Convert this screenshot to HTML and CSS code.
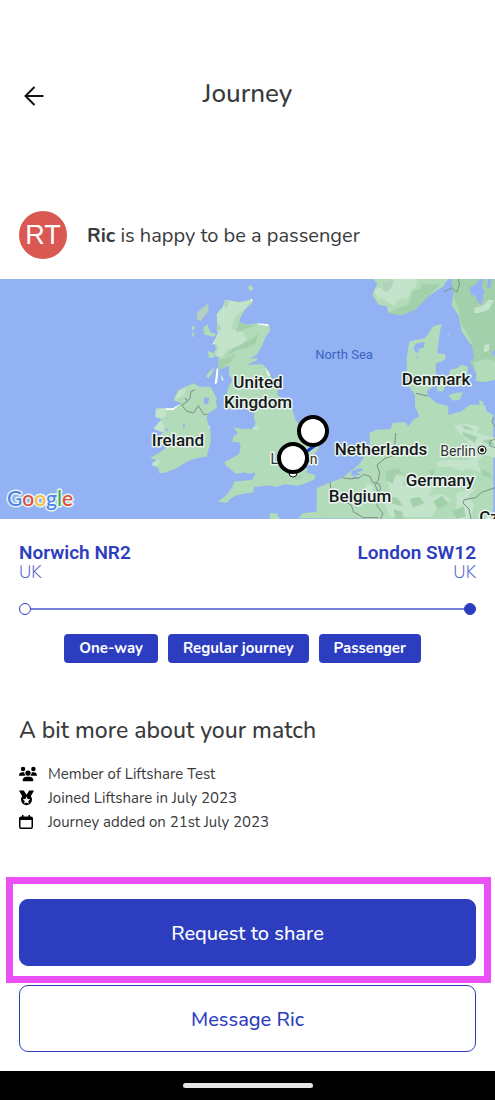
FILE: index.html
```
<!DOCTYPE html>
<html lang="en">
<head>
    <meta charset="UTF-8">
    <meta name="viewport" content="width=device-width, initial-scale=1.0">
    <title>Journey</title>
    <link rel="stylesheet" href="styles.css">
</head>
<body>
    <header class="header">
        <button class="back" type="button" aria-label="Back">
            <svg width="20" height="20" viewBox="0 0 20 20"><path d="M19.500 10H1.500M10.500 1L1.500 10l9 9"/></svg>
        </button>
        <h1>Journey</h1>
    </header>

    <main>
        <section class="person">
            <div class="avatar">RT</div>
            <p><strong>Ric</strong> is happy to be a passenger</p>
        </section>

        <svg class="map" viewBox="0 0 495 240" preserveAspectRatio="xMidYMid slice" role="img" aria-label="Map of the journey">
            <rect class="sea" width="495" height="240"/>
            <svg width="495" height="240" viewBox="0 0 1485 720">
                <!-- Great Britain -->
                <path class="land" d="M675 62l45 7 37-9v12l-22 20-15 25-2 12 22 8 32-3 36 3 2 18-12 17-13 30-15 25-20 12 22-2-2 8-30 12 48-1 20 21 8 24 15 20 3 27 17 25 25 13 10 35 15 22 60 3 2 36-10 30-25 32-22 20 19 6-7 10 28 8-1 12-27 13-25 7-40-4-25 8-20-5-45 5-3 16-34 5-19 5-16 9-10 12-28-3 24-18 20-25 5-17 55-6 10-22-20 5-15-5-25 5-15-15-15-10-3-10 43-25 5-25-5-10-20-2 2-14 14-12-13-18 27 6 35-1 5-19-5-10 2-35-17-10-25 0-20 10-8 10-10-14-9-21 12-40 10-15-10-20 0-25-25 10-8-7 3-26-17-12 8-16-6-20 14-18-5-20 2-20 3-35 13-12z"/>
                <path class="upland" d="M678 63l40 8 36-8-20 27-28 22-12 38 34 8 12 22-22 24-36 8-16 22-18-4 8-24-14-20 12-24-4-56 16-18z"/>
                <path class="hill" d="M738 190l24-14 14-16-10 34-18 10-34 8-38 22 22-26zM657 242l22-4 28-12-12 20-26 22-16 4zM718 129l26 10 24 0-30 10-30 12z"/>
                <path class="rock" d="M592 100l33-28 1 24-24 30-12-6zM650 139l10-2 3 16-13 4zM674 66l12-4-2 20-10 6z"/>
                <path class="land" d="M745 20l10 0 6 10-6 5-10-4zM576 142h10l-4 12-6-2zM577 158l6 4-2 12-5-2zM610 146l12-10 8 22 20 8-12 8-26-8zM622 215l18 6 6 14-18 2zM620 288l12-14 12-8-8 18-10 14-8-4zM662 282l10 20-8-6z"/>
                <path class="snow" d="M650 268l5 2-1 20-3 22-7 4zM664 292l6 10-4 4zM770 133l36 3-2 5-30-5zM795 267l15 22-4 3zM751 60l6 0-1 10zM640 188l6 4-6 5z"/>
                <path class="upland" d="M757 445l14-4 10 4-8 8h-12z"/>
                <!-- Ireland -->
                <path class="land" d="M520 363l15-30 45-20 20 10 32 0 23 45-5 20-25 15-5 15 12 40v30l-12 45-30 5-30 10-30 20-35 13-17 2-3-15-20-10 15-15-20-5 40-25 10-10-35-15 25-30-28-10 23-28-20-7 3-25h52l25-15z"/>
                <path class="upland" d="M468 390l27-2 4 20-14 12-18-6zM464 444l20-22 12 30-10 8-24-10zM524 358l14-24 22-8-8 22-20 12zM458 550l16-8 10 2-12 16-16-2z"/>
                <path class="sea" d="M610 362l8-8 10 4-4 16-10 2zM648 362h8l-2 18-6-4zM549 433l6 6-1 9-5-4zM496 446l8 6-2 5-8-4z"/>
                <path class="snow" d="M496 388l22 0 24-14-22 19-20 1zM627 440l4 4-2 6z"/>
                <path class="border" d="M585 332l-12 6-4 22-6 4-8-6 8 9-18 11 14 18 22 6 14-22 16 26h12"/>
                <!-- Mainland Europe -->
                <path class="land" d="M895 718l15-16 40-4 0-70 35-16 40-14 50-40 30-42 5-19-2-35 22-10 42-2 6-18 37-3 10 13 15-20 18-10-13-30v-35l-23-30-2-80 8-50 47-10 25-35 25-7-5 22-8 65 25 5-2 15-28 12 1 33-8 35-20 15 5 15 25 20 35 10v25l40-10 25-20 45 0 5 20 20 10v315z"/>
                <path class="land" d="M810 703h22v6l8 11h-32z"/>
                <path class="land" d="M1307 310l18-5 12 14-8 18-16 0zM1350 272l24-6 8-8 22 4-4 40-8 22-16-4-12-18-18 4zM1345 350l20-8 24-2-10 22-20 3zM1438 362l12 8-2 14h-10zM1344 164l5 2-4 5z"/>
                <path class="sea" d="M1240 208l8-14 26-6-2 18-10 2-8 4 4 8-10 2zM1250 228l8 8-6 2z"/>
                <path class="land" d="M1120 0h225l-15 22-45 30-40 40-40 17-40-7-5-20-25-5-18-30 14-33z"/>
                <path class="hill" d="M1240 36l20-6 6-14 54 0-35 36-40 40-40 17-40-7 30-16 30-8z"/>
                <path class="upland" d="M1122 32l38-12 22-20h70l-4 24-18 10-6 24-30 4-12 18-36-22-12 4z"/>
                <path class="rock" d="M1150 10l32-4-6 16-16 18-12-6z"/>
                <path class="hill" d="M1355 0h130v302l-30 7-28-4 3-18-20-40 13-10-8-40-30-40-8-45-22-35 5-30z"/>
                <path class="land" d="M1420 250l40-10 25 6v56l-30 7-28-4 3-18zM1355 20l8 40 12 30 12 50 30 50-6 6-26-39-8-45-22-35 5-30z"/>
                <path class="sea" d="M1409 26l20-12 8-14h14l-6 26 8 10-8 40-12-6-6-20-16-4zM1464 0h12l-6 28-8 0zM1476 220l9-6v16l-8-2z"/>
                <path class="upland" d="M1424 86l24-6 18-18 16 2-16 28-30 10-14 0zM1452 200l18-8-4 24-14 4z"/>
                <!-- Higher ground in Germany and Poland -->
                <path class="upland" d="M1360 440l40-6 40 10-12 18 57 14v60l-34-8-20 20 14 34-38-14-22 8-38-14-30 4-8-16 40-8 60 0 6-40zM1100 610l20 12-8 50-26-16zM1160 598l26-10 28 6-8 28 46-12 46 16-12 26 40-8 30 20-38 10-22 40h-126l-20-50 24-14zM1370 640l60-12-26 24 20 26-14 42h-50l10-40z"/>
                <path class="hill" d="M1386 438l20 6 18 12-30-6zM1388 458l44 16-8 18-34-22zM1156 576l38-8 16 16-22 2-10 28-18-10zM1286 576l20-6-6 16 26 4-30 10zM1104 650l20-10 10 32-20-6zM1160 648l32 10 18 24-40-10zM1230 660l28-6 16 18-36 14zM1300 668l26-18 18 24-30 16zM1180 690l26 8 6 22h-24zM1356 696l34-14 8 30-30 8zM1440 570l24 8 20 22-34-10zM880 598l20-10 10 8-20 8zM1446 486l24-6 14 20-20-4z"/>
                <path class="sea" d="M1056 575l26-8 8 6-20 8 14 6-30 2zM1060 590l18 8-20 2z"/>
                <path class="border" d="M1248 343l35 8M1187 462l-4 50-4 18-24 8-24 20 8 24-4 22-10 12 8 20-2 44 18 24-10 22M1028 596l22 4 30-4 10-10 20 6 8 18 18 4 6 14-8 18 2 22M990 610l4 30 20 16 40 22 6 20 30 18h44M1332 38l24-12 14 14 8-22-2-18M1485 626l-40 14-18 16-34 6-4 10 18 18 6 30M1480 415l-4 14 9 14M1485 480l-14 6-2 14 16 6"/>
                <path class="route" d="M946 499L900 532"/>
            </svg>
            <g class="country">
                <text x="258" y="109">United</text>
                <text x="258" y="129">Kingdom</text>
                <text x="178" y="167">Ireland</text>
                <text x="436" y="106">Denmark</text>
                <text x="381" y="176">Netherlands</text>
                <text x="440" y="207">Germany</text>
                <text x="360" y="223">Belgium</text>
                <text x="489" y="244">Cz</text>
            </g>
            <text class="water" x="344" y="80">North Sea</text>
            <g class="city">
                <text x="294" y="185">London</text>
                <text x="458" y="177">Berlin</text>
                <circle class="town" cx="482" cy="171" r="4"/>
                <circle class="town-dot" cx="482" cy="171" r="2"/>
                <circle class="town" cx="293" cy="194" r="4"/>
            </g>
            <circle class="pin" cx="313" cy="152" r="14"/>
            <circle class="pin" cx="293" cy="179" r="14"/>
            <text class="google" x="7" y="227"><tspan class="g-blue">G</tspan><tspan class="g-red">o</tspan><tspan class="g-yellow">o</tspan><tspan class="g-blue">g</tspan><tspan class="g-green">l</tspan><tspan class="g-red">e</tspan></text>
        </svg>

        <section class="route-info">
            <div class="places">
                <div class="place">
                    <h2>Norwich NR2</h2>
                    <p>UK</p>
                </div>
                <div class="place place-end">
                    <h2>London SW12</h2>
                    <p>UK</p>
                </div>
            </div>
            <div class="line">
                <span class="dot"></span>
                <span class="track"></span>
                <span class="dot dot-full"></span>
            </div>
            <div class="tags">
                <span class="tag">One-way</span>
                <span class="tag">Regular journey</span>
                <span class="tag">Passenger</span>
            </div>
        </section>

        <section class="about">
            <h2>A bit more about your match</h2>
            <ul>
                <li>
                    <svg width="18" height="16" viewBox="0 0 640 512"><path d="M144 0a80 80 0 1 1 0 160A80 80 0 1 1 144 0zM512 0a80 80 0 1 1 0 160A80 80 0 1 1 512 0zM0 298.700C0 239.800 47.800 192 106.700 192h42.700c15.900 0 31 3.500 44.600 9.700c-1.300 7.200-1.900 14.700-1.900 22.300c0 38.200 16.800 72.500 43.300 96H21.300C9.600 320 0 310.400 0 298.700zM405.300 320h-.7c26.600-23.500 43.300-57.800 43.300-96c0-7.600-.7-15-1.900-22.300c13.600-6.300 28.700-9.700 44.600-9.700h42.700C592.200 192 640 239.800 640 298.700c0 11.800-9.600 21.300-21.300 21.300H405.300zM224 224a96 96 0 1 1 192 0a96 96 0 1 1-192 0zM128 485.300C128 411.700 187.700 352 261.300 352h117.400C452.300 352 512 411.700 512 485.300c0 14.700-11.900 26.700-26.700 26.700H154.700c-14.700 0-26.700-11.900-26.700-26.700z"/></svg>
                    Member of Liftshare Test
                </li>
                <li>
                    <svg width="15" height="16" viewBox="0 0 15 16"><path fill-rule="evenodd" d="M0 .5h4.800l2.700 4.200L10.200.5H15l-3.200 5.700A5.500 5.500 0 1 1 3.200 6.200zM7.500 6.500l-1.100 2.400-2.700.4 2 1.800-.5 2.600 2.300-1.300 2.300 1.300-.5-2.600 2-1.800-2.700-.4z"/></svg>
                    Joined Liftshare in July 2023
                </li>
                <li>
                    <svg width="14" height="16" viewBox="0 0 14 16"><path fill-rule="evenodd" d="M3 1h1.500v1.500h5V1H11v1.500h1a2 2 0 0 1 2 2V13a2 2 0 0 1-2 2H2a2 2 0 0 1-2-2V4.500a2 2 0 0 1 2-2h1zM1.500 6v7a.5.5 0 0 0 .5.500h10a.5.5 0 0 0 .5-.5V6z"/></svg>
                    Journey added on 21st July 2023
                </li>
            </ul>
        </section>

        <div class="highlight">
            <button class="btn btn-primary" type="button">Request to share</button>
        </div>
        <div class="secondary">
            <button class="btn" type="button">Message Ric</button>
        </div>
    </main>

    <footer class="navbar">
        <span class="handle"></span>
    </footer>
</body>
</html>
```

FILE: styles.css
```
* {
    box-sizing: border-box;
}

body {
    margin: 0;
    background: #fff;
    color: #3a3a3c;
    font-family: Nunito, "Noto Sans", sans-serif;
}

h1, h2, p, ul {
    margin: 0;
    padding: 0;
    font-weight: 400;
}

.header {
    display: grid;
    grid-template-columns: 20px 1fr 20px;
    align-items: center;
    padding: 76px 24px 0;
}

.header h1 {
    font-size: 26px;
    line-height: 36px;
    font-weight: 500;
    text-align: center;
}

.back {
    display: flex;
    padding: 4px 0 0;
    border: none;
    background: none;
    cursor: pointer;
}

.back path {
    fill: none;
    stroke: #111;
    stroke-width: 2;
}

.person {
    display: flex;
    align-items: center;
    gap: 20px;
    padding: 99px 19px 20px;
    font-size: 20px;
    line-height: 28px;
}

.person p {
    padding-top: 2px;
}

.person strong {
    font-weight: 700;
}

.avatar {
    width: 48px;
    height: 48px;
    border-radius: 50%;
    background: #da5852;
    color: #fff;
    font-family: "Liberation Sans", Arial, sans-serif;
    font-size: 27px;
    line-height: 48px;
    text-align: center;
}

/* Map */
.map {
    display: block;
    width: 100%;
    height: 240px;
    font-family: Roboto, sans-serif;
    text-anchor: middle;
}

.sea {
    fill: #92b2f3;
}

.land {
    fill: #b1dbb9;
}

.upland {
    fill: #c4e3cb;
}

.hill {
    fill: #a1d0ab;
}

.rock {
    fill: #b5cfc0;
}

.snow {
    fill: #fff;
}

.border {
    fill: none;
    stroke: #7d8f84;
    stroke-width: 3;
}

.route {
    fill: none;
    stroke: #1a3ad0;
    stroke-width: 9;
}

.map text {
    paint-order: stroke;
    stroke: #e9f5ee;
    stroke-width: 3px;
    stroke-linejoin: round;
}

.country {
    fill: #17191b;
    font-size: 17px;
    font-weight: 500;
}

.city {
    fill: #333;
    font-size: 14px;
}

.map .water {
    fill: #3c63c4;
    stroke: none;
    font-size: 13px;
}

.town {
    fill: #fff;
    stroke: #111;
    stroke-width: 1;
}

.town-dot {
    fill: #111;
}

.pin {
    fill: #fff;
    stroke: #000;
    stroke-width: 4;
}

.google {
    font-family: Lato, sans-serif;
    font-size: 21px;
    font-weight: 500;
    text-anchor: start;
}

.g-blue {
    fill: #4c82ee;
}

.g-red {
    fill: #dd4b3e;
}

.g-yellow {
    fill: #f5bd41;
}

.g-green {
    fill: #3fa757;
}

/* Route */
.route-info {
    padding: 24px 19px 0;
}

.places {
    display: flex;
    justify-content: space-between;
    color: #2c3ebf;
}

.place h2 {
    font-family: Roboto, sans-serif;
    font-size: 19px;
    line-height: 20px;
    font-weight: 600;
}

.place p {
    font-size: 17px;
    line-height: 20px;
    font-weight: 300;
    opacity: 0.8;
}

.place-end {
    text-align: right;
}

.line {
    display: flex;
    align-items: center;
    margin-top: 20px;
}

.dot {
    width: 12px;
    height: 12px;
    border: 1px solid #2c3ebf;
    border-radius: 50%;
}

.dot-full {
    background: #2c3ebf;
}

.track {
    flex: 1;
    height: 2px;
    background: #7380d6;
}

.tags {
    display: flex;
    justify-content: center;
    margin-top: 19px;
}

.tag {
    margin-right: 10px;
    padding: 0 15px;
    border-radius: 4px;
    background: #2c3ebf;
    color: #fff;
    font-size: 15px;
    line-height: 29px;
    font-weight: 700;
}

/* Match details */
.about {
    padding: 52px 19px 43px;
}

.about h2 {
    margin-bottom: 15px;
    font-size: 23px;
    line-height: 32px;
    font-weight: 500;
}

.about ul {
    list-style: none;
}

.about li {
    display: grid;
    grid-template-columns: 29px 1fr;
    align-items: center;
    font-size: 15px;
    line-height: 24px;
}

.about svg {
    fill: #000;
}

/* Actions */
.highlight {
    margin: 0 4px 2px 6px;
    padding: 15px 8px 10px 6px;
    border: 7px solid #ea50f5;
}

.secondary {
    padding: 0 19px 19px;
}

.btn {
    display: block;
    width: 100%;
    height: 67px;
    padding: 2px 0 0;
    border: 1px solid #2c3ebf;
    border-radius: 9px;
    background: #fff;
    color: #2c3ebf;
    font-family: inherit;
    font-size: 20px;
    font-weight: 500;
    cursor: pointer;
}

.btn-primary {
    background: #2c3ebf;
    color: #fff;
}

.navbar {
    display: flex;
    justify-content: center;
    padding: 12px 0;
    background: #000;
}

.handle {
    width: 130px;
    height: 5px;
    border-radius: 3px;
    background: #e6e6e6;
}
```
